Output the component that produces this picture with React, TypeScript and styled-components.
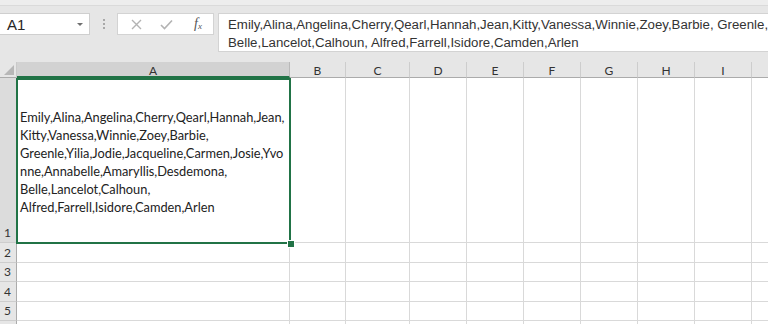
import styled, { createGlobalStyle } from 'styled-components';

const GlobalStyle = createGlobalStyle`
    html, body {
        margin: 0;
        padding: 0;
        background: #ffffff;
        overflow: hidden;
    }
    * {
        box-sizing: border-box;
    }
`;

const cellLines = [
    'Emily,Alina,Angelina,Cherry,Qearl,Hannah,Jean,',
    'Kitty,Vanessa,Winnie,Zoey,Barbie,',
    'Greenle,Yilia,Jodie,Jacqueline,Carmen,Josie,Yvo',
    'nne,Annabelle,Amaryllis,Desdemona,',
    'Belle,Lancelot,Calhoun,',
    'Alfred,Farrell,Isidore,Camden,Arlen',
];

const formulaLines = [
    'Emily,Alina,Angelina,Cherry,Qearl,Hannah,Jean,Kitty,Vanessa,Winnie,Zoey,Barbie, Greenle,Yilia,Jodie,Jacqueline,Carmen,Josie,Yvonne,Annabelle,Amaryllis,Desdemona,',
    'Belle,Lancelot,Calhoun, Alfred,Farrell,Isidore,Camden,Arlen',
];

const columns = [
    { name: 'A', width: 273 },
    { name: 'B', width: 56 },
    { name: 'C', width: 64 },
    { name: 'D', width: 57 },
    { name: 'E', width: 57 },
    { name: 'F', width: 57 },
    { name: 'G', width: 57 },
    { name: 'H', width: 57 },
    { name: 'I', width: 57 },
    { name: '', width: 40 },
];

// row 6 only peeks in at the bottom edge, so its number stays out of view
const rows = [
    { num: '1', height: 165 },
    { num: '2', height: 20 },
    { num: '3', height: 19 },
    { num: '4', height: 20 },
    { num: '5', height: 19 },
    { num: '', height: 20 },
];

const App = () => {
    const colTemplate = `17px ${columns.map(c => `${c.width}px`).join(' ')}`;
    const rowTemplate = `16px ${rows.map(r => `${r.height}px`).join(' ')}`;

    return (
        <>
        <GlobalStyle />
        <Page>
            <TopStrip />
            <FormulaBar>
                <NameBox>
                    <span>A1</span>
                    <DropArrow />
                </NameBox>
                <Grip>
                    <i /><i /><i />
                </Grip>
                <ButtonBox>
                    <IconButton>
                        <svg width="11" height="11" viewBox="0 0 11 11">
                            <path d="M1 1 L10 10 M10 1 L1 10" stroke="#b3b3b3" strokeWidth="1.4" fill="none" />
                        </svg>
                    </IconButton>
                    <IconButton>
                        <svg width="13" height="11" viewBox="0 0 13 11">
                            <path d="M1 6 L4.5 9.5 L12 1.5" stroke="#b3b3b3" strokeWidth="1.6" fill="none" />
                        </svg>
                    </IconButton>
                    <FxLabel>f<sub>x</sub></FxLabel>
                </ButtonBox>
                <FormulaInput>
                    {formulaLines.map(line => <FormulaLine key={line}>{line}</FormulaLine>)}
                </FormulaInput>
            </FormulaBar>

            <Sheet style={{ gridTemplateColumns: colTemplate, gridTemplateRows: rowTemplate }}>
                <Corner>
                    <CornerTriangle />
                </Corner>
                {columns.map(col => (
                    <ColHeader key={col.name || 'rest'} selected={col.name === 'A'}>{col.name}</ColHeader>
                ))}

                {rows.map((row, i) => (
                    <Row key={i}>
                        <RowHeader selected={row.num === '1'}>{row.num}</RowHeader>
                        {columns.map(col => {
                            const active = row.num === '1' && col.name === 'A';
                            return (
                                <Cell key={col.name || 'rest'} active={active}>
                                    {active && (
                                        <>
                                        <CellText>
                                            {cellLines.map(line => <div key={line}>{line}</div>)}
                                        </CellText>
                                        <FillHandle />
                                        </>
                                    )}
                                </Cell>
                            );
                        })}
                    </Row>
                ))}
            </Sheet>
        </Page>
        </>
    );
};

const Page = styled.div`
    width: 768px;
    height: 324px;
    overflow: hidden;
    background: #e6e6e6;
    display: flex;
    flex-direction: column;
`;

const TopStrip = styled.div`
    height: 6px;
    background: #ededed;
    border-bottom: 1px solid #dadada;
    flex-shrink: 0;
`;

const FormulaBar = styled.div`
    display: flex;
    align-items: flex-start;
    height: 56px;
    padding-top: 7px;
    flex-shrink: 0;
`;

const NameBox = styled.div`
    width: 90px;
    height: 22px;
    background: #ffffff;
    border: 1px solid #cfcfcf;
    border-left: none;
    display: flex;
    align-items: center;
    justify-content: space-between;
    padding: 0 6px 0 7px;
    font-family: "Liberation Sans", Arial, sans-serif;
    font-size: 15px;
    color: #262626;
`;

const DropArrow = styled.span`
    width: 0;
    height: 0;
    border-left: 3.5px solid transparent;
    border-right: 3.5px solid transparent;
    border-top: 3.5px solid #6f6f6f;
    margin-top: 1px;
`;

const Grip = styled.div`
    width: 27px;
    height: 22px;
    display: flex;
    flex-direction: column;
    align-items: center;
    justify-content: center;
    gap: 2px;

    i {
        display: block;
        width: 2px;
        height: 2px;
        background: #a8a8a8;
    }
`;

const ButtonBox = styled.div`
    width: 97px;
    height: 22px;
    background: #ffffff;
    border: 1px solid #d3d3d3;
    display: flex;
    align-items: center;
    padding-left: 11px;
    gap: 16px;
`;

const IconButton = styled.span`
    width: 14px;
    display: flex;
    align-items: center;
    justify-content: center;
`;

const FxLabel = styled.span`
    margin-left: 5px;
    font-family: "Liberation Serif", "Times New Roman", serif;
    font-style: italic;
    font-size: 14px;
    color: #555555;
    line-height: 1;

    sub {
        font-size: 9px;
        vertical-align: baseline;
        position: relative;
        top: 1px;
    }
`;

const FormulaInput = styled.div`
    margin-left: 4px;
    flex: 1;
    min-width: 0;
    height: 39px;
    background: #ffffff;
    border: 1px solid #d3d3d3;
    border-right: none;
    padding: 2px 0 0 9px;
    overflow: hidden;
`;

const FormulaLine = styled.div`
    font-family: "Liberation Sans", Arial, sans-serif;
    font-size: 13.25px;
    line-height: 18px;
    color: #333333;
    white-space: nowrap;
`;

const Sheet = styled.div`
    display: grid;
    background: #ffffff;
    flex: 1;
    align-content: start;
`;

const Row = styled.div`
    display: contents;
`;

const Corner = styled.div`
    background: #e6e6e6;
    border-right: 1px solid #c9c9c9;
    border-bottom: 1px solid #ababab;
    position: relative;
`;

const CornerTriangle = styled.span`
    position: absolute;
    right: 2px;
    bottom: 2px;
    width: 0;
    height: 0;
    border-left: 10px solid transparent;
    border-bottom: 10px solid #b7b7b7;
`;

const ColHeader = styled.div<{ selected?: boolean }>`
    background: ${p => (p.selected ? '#d2d2d2' : '#e6e6e6')};
    border-right: 1px solid ${p => (p.selected ? '#b9b9b9' : '#cdcdcd')};
    border-bottom: ${p => (p.selected ? '2px solid #217346' : '1px solid #ababab')};
    display: flex;
    align-items: center;
    justify-content: center;
    font-family: Lato, "Open Sans", sans-serif;
    font-size: 12px;
    color: #333333;
    padding-top: ${p => (p.selected ? '2px' : '1px')};
`;

const RowHeader = styled.div<{ selected?: boolean }>`
    background: ${p => (p.selected ? '#dcdcdc' : '#e6e6e6')};
    border-right: 1px solid #ababab;
    border-bottom: 1px solid #cdcdcd;
    display: flex;
    align-items: flex-end;
    padding: 0 0 1px 4px;
    font-family: Lato, "Open Sans", sans-serif;
    font-size: 12px;
    line-height: 16px;
    color: #333333;
`;

const Cell = styled.div<{ active?: boolean }>`
    position: relative;
    border-right: 1px solid #d9d9d9;
    border-bottom: 1px solid #d9d9d9;
    display: flex;
    align-items: flex-start;
    ${p => p.active && `
        box-shadow: inset 0 0 0 2px #217346;
        margin-left: -1px;
        width: calc(100% + 2px);
        border: none;
        height: calc(100% + 1px);
        z-index: 2;
    `}
`;

const CellText = styled.div`
    padding: 30px 0 0 4px;
    font-family: Lato, "Open Sans", sans-serif;
    font-size: 12.8px;
    line-height: 18px;
    color: #222222;
    white-space: nowrap;
`;

const FillHandle = styled.span`
    position: absolute;
    right: -3px;
    bottom: -3px;
    width: 6px;
    height: 6px;
    background: #217346;
    border: 1px solid #ffffff;
    box-sizing: content-box;
    transform: translate(1px, 1px);
`;

export default App;
